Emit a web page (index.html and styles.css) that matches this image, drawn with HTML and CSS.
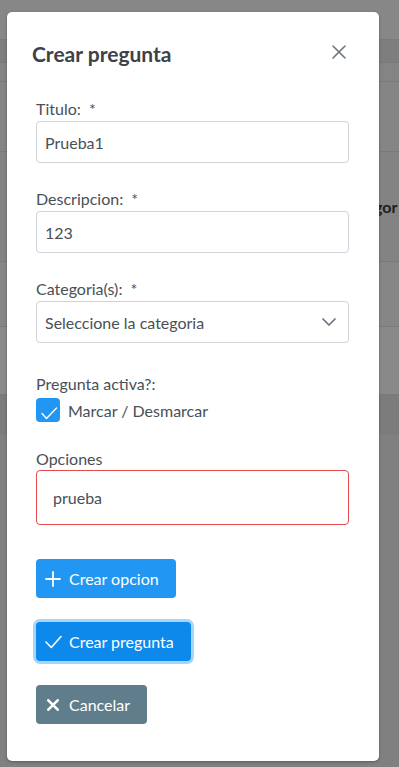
FILE: index.html
```html
<!DOCTYPE html>
<html lang="es">
<head>
<meta charset="utf-8">
<title>Crear pregunta</title>
<link rel="stylesheet" href="styles.css">
</head>
<body>
<div class="page">
  <div class="bg-row r0"></div>
  <div class="bg-row r1"></div>
  <div class="bg-row r2"></div>
  <div class="bg-row r3"></div>
  <div class="bg-row r4"><span class="bg-text">Categor</span></div>
  <div class="bg-row r5"></div>
  <div class="bg-row r6"></div>
  <div class="bg-row r7"></div>
  <div class="bg-row r8"></div>
</div>

<div class="dialog">
  <div class="dialog-header">
    <span class="dialog-title">Crear pregunta</span>
    <button class="dialog-close" type="button" aria-label="Cerrar">
      <svg width="14" height="14" viewBox="0 0 14 14"><path d="M1 1 L13 13 M13 1 L1 13" stroke="#6c757d" stroke-width="1.6" fill="none" stroke-linecap="round"/></svg>
    </button>
  </div>
  <div class="dialog-content">
    <div class="field f1">
      <label class="field-label">Titulo: &nbsp;*</label>
      <div class="input">Prueba1</div>
    </div>
    <div class="field f2">
      <label class="field-label">Descripcion: &nbsp;*</label>
      <div class="input">123</div>
    </div>
    <div class="field f3">
      <label class="field-label">Categoria(s): &nbsp;*</label>
      <div class="input dropdown">
        <span>Seleccione la categoria</span>
        <svg class="chevron" width="14" height="10" viewBox="0 0 14 10"><path d="M1 2 L7 8 L13 2" stroke="#6c757d" stroke-width="1.7" fill="none" stroke-linecap="round" stroke-linejoin="round"/></svg>
      </div>
    </div>
    <div class="field f4">
      <label class="field-label">Pregunta activa?:</label>
      <div class="check-row">
        <span class="checkbox">
          <svg width="24" height="24" viewBox="0 0 24 24"><path d="M6 15.5 L10.5 20.5 L20.5 10" stroke="#fff" stroke-width="1.4" fill="none" stroke-linecap="round" stroke-linejoin="round"/></svg>
        </span>
        <span class="check-label">Marcar / Desmarcar</span>
      </div>
    </div>
    <div class="field f5">
      <label class="field-label">Opciones</label>
      <div class="options">prueba</div>
    </div>
    <div class="actions">
      <button class="btn btn-primary" type="button">
        <svg class="btn-icon" width="16" height="16" viewBox="0 0 16 16"><path d="M8 1 V15 M1 8 H15" stroke="#fff" stroke-width="1.8" fill="none" stroke-linecap="round"/></svg>
        <span>Crear opcion</span>
      </button>
      <button class="btn btn-focus" type="button">
        <svg class="btn-icon" width="17" height="14" viewBox="0 0 17 14"><path d="M1 7 L6.3 12.5 L16 1.5" stroke="#fff" stroke-width="1.6" fill="none" stroke-linecap="round" stroke-linejoin="round"/></svg>
        <span>Crear pregunta</span>
      </button>
      <button class="btn btn-secondary" type="button">
        <svg class="btn-icon" width="12" height="12" viewBox="0 0 12 12"><path d="M1.3 1.3 L10.7 10.7 M10.7 1.3 L1.3 10.7" stroke="#fff" stroke-width="2.6" fill="none" stroke-linecap="round"/></svg>
        <span>Cancelar</span>
      </button>
    </div>
  </div>
</div>
</body>
</html>
```

FILE: styles.css
```css
html, body {
  margin: 0;
  padding: 0;
}
body {
  width: 399px;
  height: 767px;
  overflow: hidden;
  background: #808080;
  font-family: Lato, "Noto Sans", sans-serif;
  position: relative;
}

.page {
  display: flex;
  flex-direction: column;
}
.bg-row {
  box-sizing: border-box;
  border-bottom: 1px solid #7a7a7a;
  display: flex;
  align-items: center;
}
.r0 { height: 40px; background: #878787; }
.r1 { height: 23px; background: #7e7e7e; }
.r2 { height: 19px; background: #848484; }
.r3 { height: 70px; background: #858585; }
.r4 { height: 110px; background: #838383; }
.r5 { height: 65px; background: #868686; }
.r6 { height: 68px; background: #898989; }
.r7 { height: 39px; background: #7c7c7c; }
.r8 { height: 333px; background: #808080; border-bottom: none; }
.bg-text {
  padding-left: 341px;
  font-weight: 700;
  font-size: 16px;
  color: #1e1e1e;
  white-space: nowrap;
}

.dialog {
  position: absolute;
  left: 7px;
  top: 12px;
  width: 372px;
  height: 749px;
  background: #ffffff;
  border-radius: 5px;
  box-shadow: 0 1px 3px rgba(0,0,0,0.3);
  box-sizing: border-box;
}

.dialog-header {
  display: flex;
  align-items: center;
  justify-content: space-between;
  height: 32px;
  padding: 24px 24px 0 25px;
}
.dialog-title {
  font-size: 21px;
  line-height: 24px;
  font-weight: 700;
  color: #3d4247;
  margin-top: 3px;
}
.dialog-close {
  width: 32px;
  height: 32px;
  border: none;
  background: transparent;
  padding: 0;
  display: flex;
  align-items: center;
  justify-content: center;
}

.dialog-content {
  padding: 0 30px 0 29px;
  margin-top: 31px;
  color: #495057;
  font-size: 16px;
}

.field-label {
  display: block;
  font-size: 16px;
  line-height: 20px;
  height: 20px;
  margin-bottom: 2px;
  color: #495057;
}
.f2, .f3 { margin-top: 26px; }
.f4 { margin-top: 31px; }
.f4 .field-label { margin-bottom: 4px; }
.f5 { margin-top: 27px; }
.f5 .field-label { margin-bottom: 1px; }

.input {
  box-sizing: border-box;
  height: 42px;
  border: 1px solid #ced4da;
  border-radius: 4px;
  padding: 0 8px;
  display: flex;
  align-items: center;
  font-size: 16px;
  color: #495057;
}
.dropdown {
  justify-content: space-between;
  padding-right: 12px;
}

.check-row {
  display: flex;
  align-items: center;
  gap: 8px;
  height: 24px;
}
.checkbox {
  width: 24px;
  height: 24px;
  background: #2196f3;
  border-radius: 4px;
  display: flex;
}
.check-label {
  font-size: 16px;
  color: #495057;
}

.options {
  box-sizing: border-box;
  height: 55px;
  border: 1px solid #e24c4c;
  border-radius: 4px;
  padding: 0 16px;
  display: flex;
  align-items: center;
  font-size: 16px;
  color: #495057;
}

.actions {
  display: flex;
  flex-direction: column;
  align-items: flex-start;
  gap: 24px;
  margin-top: 34px;
}
.btn {
  box-sizing: border-box;
  height: 39px;
  border: none;
  border-radius: 4px;
  padding: 0 17px 0 9px;
  display: flex;
  align-items: center;
  gap: 8px;
  font-family: Lato, "Noto Sans", sans-serif;
  font-size: 16px;
  color: #ffffff;
}
.btn-icon {
  flex: none;
}
.btn-primary { background: #2196f3; }
.btn-focus {
  background: #0d89ec;
  box-shadow: 0 0 0 3px #a6d5fa;
  gap: 7px;
}
.btn-secondary {
  background: #607d8b;
  padding-left: 11px;
  gap: 10px;
}
```
